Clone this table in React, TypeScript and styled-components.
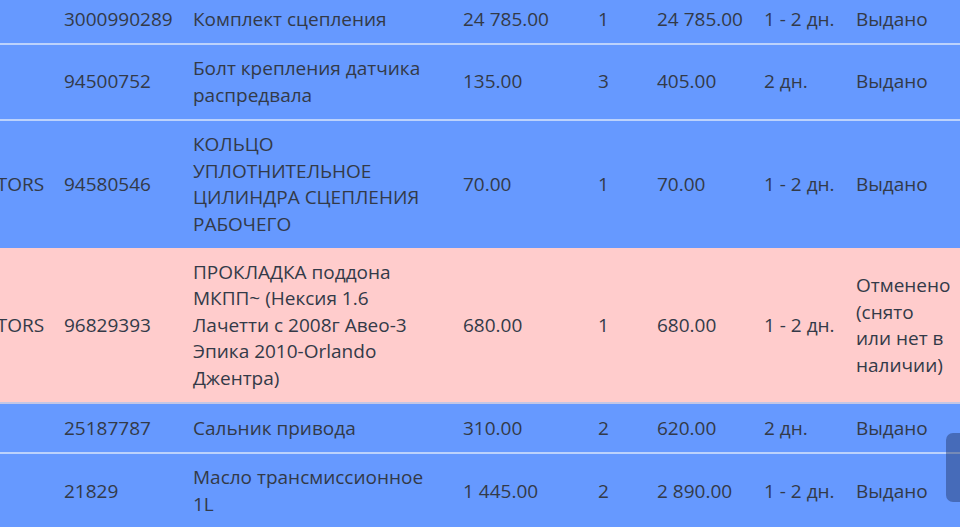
import React from "react";
import styled, { createGlobalStyle } from "styled-components";

const GlobalStyle = createGlobalStyle`
  html, body { margin: 0; padding: 0; background: #6699ff; overflow: hidden; }
  body { font-family: "Open Sans", "Liberation Sans", sans-serif; }
`;

const Viewport = styled.div`
  width: 960px;
  height: 527px;
  overflow: hidden;
  position: relative;
  background: #6699ff;
`;

const Table = styled.div`
  display: flex;
  flex-direction: column;
  width: max-content;
  margin: -7px 0 0 -123px;
`;

type Tone = "blue" | "pink";

const Row = styled.div<{ $tone: Tone; $line: string | null }>`
  display: grid;
  grid-template-columns: 187px 129px 270px 135px 59px 107px 92px 120px;
  align-items: center;
  background: ${(p) => (p.$tone === "pink" ? "#ffcccc" : "#6699ff")};
  border-top: ${(p) => (p.$line ? `2px solid ${p.$line}` : "none")};
  color: #333a48;
  font-size: 19px;
  line-height: 26.6px;
`;

const Cell = styled.div<{ $pr?: number }>`
  padding: 10.5px ${(p) => p.$pr ?? 8}px 10.5px 0;
  min-width: 0;
`;

const Brand = styled(Cell)`
  white-space: nowrap;
  overflow: hidden;
`;

const Status = styled(Cell)`
  padding-right: 26px;
`;

const ScrollThumb = styled.div`
  position: absolute;
  right: 0;
  top: 433px;
  width: 14px;
  height: 69px;
  border-radius: 7px 0 0 7px;
  background: rgba(30, 50, 100, 0.45);
`;

type Item = {
  brand: string;
  art: string;
  name: string;
  price: string;
  qty: string;
  sum: string;
  term: string;
  status: string;
  tone: Tone;
  line: string | null;
};

const items: Item[] = [
  { brand: "GM", art: "3000990289", name: "Комплект сцепления", price: "24 785.00", qty: "1", sum: "24 785.00", term: "1 - 2 дн.", status: "Выдано", tone: "blue", line: "#bcd2fc" },
  { brand: "GM", art: "94500752", name: "Болт крепления датчика распредвала", price: "135.00", qty: "3", sum: "405.00", term: "2 дн.", status: "Выдано", tone: "blue", line: "#bcd2fc" },
  { brand: "GENERAL MOTORS", art: "94580546", name: "КОЛЬЦО УПЛОТНИТЕЛЬНОЕ ЦИЛИНДРА СЦЕПЛЕНИЯ РАБОЧЕГО", price: "70.00", qty: "1", sum: "70.00", term: "1 - 2 дн.", status: "Выдано", tone: "blue", line: "#bcd2fc" },
  { brand: "GENERAL MOTORS", art: "96829393", name: "ПРОКЛАДКА поддона МКПП~ (Нексия 1.6 Лачетти с 2008г Авео-3 Эпика 2010-Orlando Джентра)", price: "680.00", qty: "1", sum: "680.00", term: "1 - 2 дн.", status: "Отменено (снято или нет в наличии)", tone: "pink", line: null },
  { brand: "GM", art: "25187787", name: "Сальник привода", price: "310.00", qty: "2", sum: "620.00", term: "2 дн.", status: "Выдано", tone: "blue", line: "#c3c6e6" },
  { brand: "GM", art: "21829", name: "Масло трансмиссионное 1L", price: "1 445.00", qty: "2", sum: "2 890.00", term: "1 - 2 дн.", status: "Выдано", tone: "blue", line: "#bcd2fc" },
];

export default function App() {
  return (
    <>
      <GlobalStyle />
      <Viewport>
        <Table>
          {items.map((it) => (
            <Row key={it.art} $tone={it.tone} $line={it.line}>
              <Brand>{it.brand}</Brand>
              <Cell>{it.art}</Cell>
              <Cell $pr={25}>{it.name}</Cell>
              <Cell>{it.price}</Cell>
              <Cell>{it.qty}</Cell>
              <Cell>{it.sum}</Cell>
              <Cell>{it.term}</Cell>
              <Status>{it.status}</Status>
            </Row>
          ))}
        </Table>
        <ScrollThumb />
      </Viewport>
    </>
  );
}
